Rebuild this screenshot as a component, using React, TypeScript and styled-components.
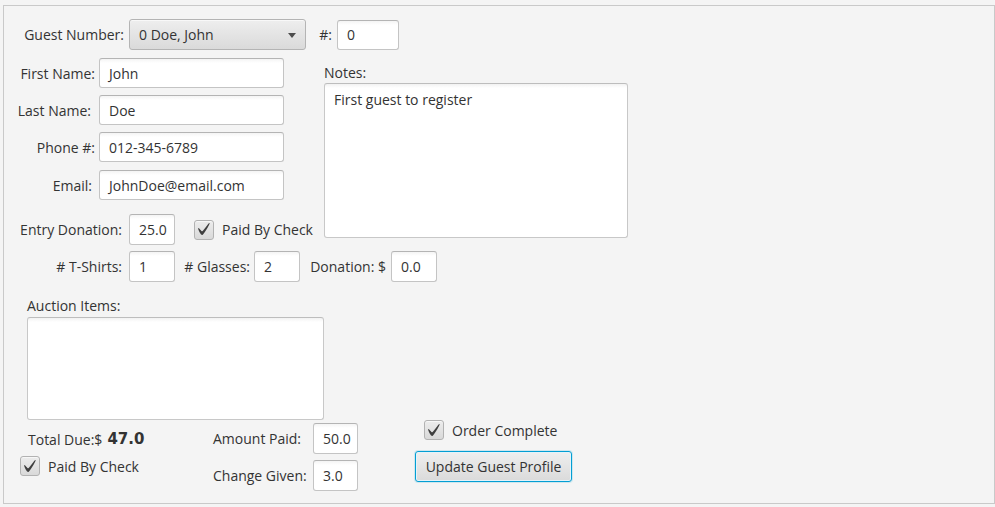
import styled, { createGlobalStyle } from 'styled-components'

const GlobalStyle = createGlobalStyle`
  html, body {
    margin: 0;
    padding: 0;
    background: #f4f4f4;
  }
  body {
    font-family: 'Open Sans', 'Liberation Sans', sans-serif;
    font-size: 14px;
    color: #333;
  }
`

const Panel = styled.div`
  box-sizing: border-box;
  width: 992px;
  height: 499px;
  margin: 5px 0 0 3px;
  padding-top: 13px;
  border: 1px solid #c9c9c9;
  background: #f4f4f4;
`

const Row = styled.div<{ $h?: number; $mt?: number }>`
  display: flex;
  align-items: center;
  height: ${(p) => p.$h ?? 30}px;
  margin-top: ${(p) => p.$mt ?? 0}px;
`

const Label = styled.span<{ $w?: number; $pr?: number; $pl?: number; $right?: boolean }>`
  box-sizing: border-box;
  flex: none;
  width: ${(p) => (p.$w ? `${p.$w}px` : 'auto')};
  padding-right: ${(p) => p.$pr ?? 0}px;
  padding-left: ${(p) => p.$pl ?? 0}px;
  text-align: ${(p) => (p.$right ? 'right' : 'left')};
  white-space: nowrap;
`

const TextInput = styled.div<{ $w: number; $h?: number; $ml?: number }>`
  box-sizing: border-box;
  flex: none;
  display: flex;
  align-items: center;
  width: ${(p) => p.$w}px;
  height: ${(p) => p.$h ?? 30}px;
  margin-left: ${(p) => p.$ml ?? 0}px;
  padding: 0 9px;
  border: 1px solid #c4c4c4;
  border-top-color: #b4b4b4;
  border-radius: 3px;
  background: linear-gradient(to bottom, #f4f4f4 0px, #ffffff 4px);
  white-space: nowrap;
  overflow: hidden;
`

const TextArea = styled.div<{ $w: number; $h: number; $ml?: number }>`
  box-sizing: border-box;
  width: ${(p) => p.$w}px;
  height: ${(p) => p.$h}px;
  margin-left: ${(p) => p.$ml ?? 0}px;
  padding: 5px 9px;
  border: 1px solid #c8c8c8;
  border-top-color: #bdbdbd;
  border-radius: 3px;
  background: linear-gradient(to bottom, #f2f2f2 0px, #ffffff 4px);
  line-height: 22px;
`

const Combo = styled.div`
  box-sizing: border-box;
  position: relative;
  display: flex;
  align-items: center;
  width: 177px;
  height: 31px;
  margin-left: 4px;
  padding-left: 9px;
  border: 1px solid #b4b4b4;
  border-radius: 3px;
  background: linear-gradient(to bottom, #eeeeee, #dadada);
  box-shadow: inset 0 1px 0 #f8f8f8;
`

const Arrow = styled.span`
  position: absolute;
  right: 9px;
  top: 13px;
  width: 0;
  height: 0;
  border-left: 4px solid transparent;
  border-right: 4px solid transparent;
  border-top: 5px solid #4d4d4d;
`

const Section = styled.div<{ $mt?: number }>`
  display: flex;
  margin-top: ${(p) => p.$mt ?? 0}px;
`

const Column = styled.div<{ $w?: number; $pt?: number }>`
  display: flex;
  flex-direction: column;
  flex: none;
  width: ${(p) => (p.$w ? `${p.$w}px` : 'auto')};
  padding-top: ${(p) => p.$pt ?? 0}px;
`

const Caption = styled.div<{ $h: number; $pl?: number; $mt?: number }>`
  height: ${(p) => p.$h}px;
  margin-top: ${(p) => p.$mt ?? 0}px;
  line-height: ${(p) => p.$h + 4}px;
  padding-left: ${(p) => p.$pl ?? 0}px;
  white-space: nowrap;
`

const Box = styled.span<{ $ml?: number }>`
  box-sizing: border-box;
  flex: none;
  display: flex;
  align-items: center;
  justify-content: center;
  width: 20px;
  height: 20px;
  margin-left: ${(p) => p.$ml ?? 0}px;
  border: 1px solid #b2b2b2;
  border-radius: 3px;
  background: linear-gradient(to bottom, #ececec, #d9d9d9);
  box-shadow: inset 0 1px 0 #f7f7f7;
`

const CheckText = styled.span`
  margin-left: 8px;
  white-space: nowrap;
`

const Amount = styled.span`
  margin-left: 5px;
  font-family: 'DejaVu Sans', Verdana, sans-serif;
  font-weight: 700;
  font-size: 15px;
  color: #333;
`

const Button = styled.div`
  box-sizing: border-box;
  display: flex;
  align-items: center;
  justify-content: center;
  width: 157px;
  height: 31px;
  border: 1px solid #039ed3;
  border-radius: 3px;
  background: linear-gradient(to bottom, #efefef, #dadada);
  box-shadow: inset 0 0 0 1px #e4f3fa, 0 0 0 1px rgba(3, 158, 211, 0.15);
  white-space: nowrap;
`

const Check = ({ label, ml }: { label: string; ml?: number }) => (
  <>
    <Box $ml={ml}>
      <svg width="12" height="13" viewBox="-0.5 -1 17 18.5">
        <path
          d="M-0.25,6.083c0.843-0.758,4.583,4.833,5.75,4.833S14.5-1.5,15.917-0.917c1.292,0.532-8.75,17.083-10.5,17.083C3,16.167-1.083,6.833-0.25,6.083z"
          fill="#3f3f3f"
        />
      </svg>
    </Box>
    <CheckText>{label}</CheckText>
  </>
)

export default function App() {
  return (
    <>
      <GlobalStyle />
      <Panel>
        <Row $h={31}>
          <Label $w={121} $pr={1} $right>Guest Number:</Label>
          <Combo>
            0 Doe, John
            <Arrow />
          </Combo>
          <Label $w={26} $right>#:</Label>
          <TextInput $w={62} $ml={5}>0</TextInput>
        </Row>

        <Section $mt={8}>
          <Column $w={320}>
            <Row>
              <Label $w={91} $right>First Name:</Label>
              <TextInput $w={185} $ml={4}>John</TextInput>
            </Row>
            <Row $mt={7}>
              <Label $w={91} $pr={4} $right>Last Name:</Label>
              <TextInput $w={185} $ml={4}>Doe</TextInput>
            </Row>
            <Row $mt={7}>
              <Label $w={91} $right>Phone #:</Label>
              <TextInput $w={185} $ml={4}>012-345-6789</TextInput>
            </Row>
            <Row $mt={8}>
              <Label $w={91} $pr={3} $right>Email:</Label>
              <TextInput $w={185} $ml={4}>JohnDoe@email.com</TextInput>
            </Row>
            <Row $h={31} $mt={14}>
              <Label $w={118} $right>Entry Donation:</Label>
              <TextInput $w={46} $h={31} $ml={7}>25.0</TextInput>
              <Check label="Paid By Check" ml={19} />
            </Row>
          </Column>
          <Column>
            <Caption $h={25}>Notes:</Caption>
            <TextArea $w={304} $h={155}>First guest to register</TextArea>
          </Column>
        </Section>

        <Row $h={31} $mt={6}>
          <Label $w={118} $right>#&nbsp;T-Shirts:</Label>
          <TextInput $w={46} $h={31} $ml={7}>1</TextInput>
          <Label $w={75} $right># Glasses:</Label>
          <TextInput $w={46} $h={31} $ml={4}>2</TextInput>
          <Label $w={86} $right>Donation: $</Label>
          <TextInput $w={46} $h={31} $ml={5}>0.0</TextInput>
        </Row>

        <Caption $h={27} $pl={23} $mt={8}>Auction Items:</Caption>
        <TextArea $w={297} $h={103} $ml={23} />

        <Section>
          <Column $w={209} $pt={4}>
            <Row>
              <Label $pl={24}>Total Due:$</Label>
              <Amount>47.0</Amount>
            </Row>
            <Row $h={20} $mt={2}>
              <Check label="Paid By Check" ml={16} />
            </Row>
          </Column>
          <Column $w={202} $pt={3}>
            <Row>
              <Label $w={100}>Amount Paid:</Label>
              <TextInput $w={45} $h={31}>50.0</TextInput>
            </Row>
            <Row $mt={7}>
              <Label $w={100}>Change Given:</Label>
              <TextInput $w={45} $h={31}>3.0</TextInput>
            </Row>
          </Column>
          <Column>
            <Row $h={20}>
              <Check label="Order Complete" ml={9} />
            </Row>
            <Row $h={31} $mt={11}>
              <Button>Update Guest Profile</Button>
            </Row>
          </Column>
        </Section>
      </Panel>
    </>
  )
}
